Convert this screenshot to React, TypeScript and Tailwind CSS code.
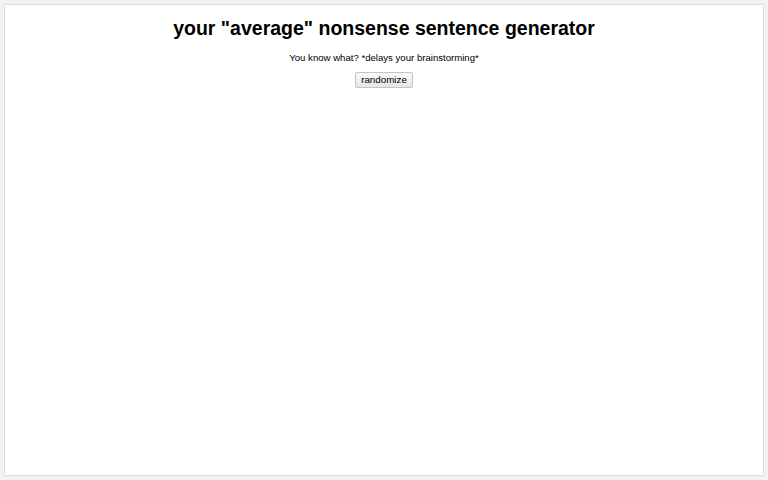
export default function App() {
  return (
    <div className="h-[480px] w-[768px] bg-[#f2f2f2] p-1 font-['Liberation_Sans',Arial,sans-serif]">
      <div className="flex h-[472px] flex-col items-center border border-[#dcdcdc] bg-white pt-[11px]">
        <h1 className="text-[19.5px] font-bold leading-[24px] text-black">
          your "average" nonsense sentence generator
        </h1>
        <p className="mt-[12px] text-[9.6px] leading-[12px] text-black">
          You know what? *delays your brainstorming*
        </p>
        <button
          type="button"
          className="mt-[8px] h-[16px] rounded-[2px] border border-[#c4c4c4] bg-gradient-to-b from-[#fafafa] to-[#e6e6e6] px-[5px] text-[9.8px] leading-[14px] text-black"
        >
          randomize
        </button>
      </div>
    </div>
  );
}
